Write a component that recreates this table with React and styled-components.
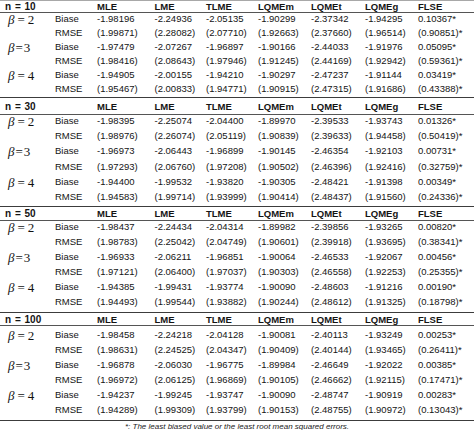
import React from 'react';
import styled, { createGlobalStyle } from 'styled-components';

const GlobalStyle = createGlobalStyle`
  body {
    margin: 0;
    background: #fff;
  }
`;

const COLS = '55px 42px 57.5px 51.5px 52px 53px 54px 53px 56px';

const Table = styled.div`
  width: 474px;
  height: 430px;
  overflow: hidden;
  font-family: "Liberation Sans", Arial, sans-serif;
  font-size: 9.5px;
  color: #141414;
`;

const HeadRow = styled.div`
  display: grid;
  grid-template-columns: ${COLS};
  align-items: center;
  box-sizing: border-box;
  height: ${p => p.$h}px;
  border-top: 1px solid ${p => (p.$first ? '#a8a8a8' : '#3c3c3c')};
  border-bottom: 1px solid #555;
  font-weight: bold;
  line-height: 11px;
`;

const SampleLabel = styled.div`
  grid-column: span 2;
  padding-left: 5px;
  font-size: 10px;
  word-spacing: 1px;
`;

const Block = styled.div`
  box-sizing: border-box;
  height: ${p => p.$h}px;
  padding-top: ${p => p.$pt}px;
`;

const Row = styled.div`
  display: grid;
  grid-template-columns: ${COLS};
  align-items: start;
  height: ${p => p.$rh}px;
  line-height: 11px;
  white-space: nowrap;
`;

const Beta = styled.div`
  padding-left: 8px;
  margin-top: 1px;
  font-family: "Liberation Serif", "Times New Roman", serif;
  font-size: 13px;
  color: #111;
`;

const BetaSym = styled.i`
  font-style: italic;
`;

const Eq = styled.span`
  margin: 0 ${p => p.$gap}px;
`;

const Cell = styled.div``;

const Footnote = styled.div`
  border-top: 1px solid #3c3c3c;
  padding-top: 1px;
  text-align: center;
  font-style: italic;
  font-size: 8px;
  line-height: 10px;
  color: #222;
`;

const methods = ['MLE', 'LME', 'TLME', 'LQMEm', 'LQMEt', 'LQMEg', 'FLSE'];

const sections = [
  {
    n: 10, head: 13, block: 84, pt: 0, rh: 14,
    groups: [
      ['-1.98196 -2.24936 -2.05135 -1.90299 -2.37342 -1.94295 0.10367*',
        '(1.99871) (2.28082) (2.07710) (1.92663) (2.37660) (1.96514) (0.90851)*'],
      ['-1.97479 -2.07267 -1.96897 -1.90166 -2.44033 -1.91976 0.05095*',
        '(1.98416) (2.08643) (1.97946) (1.91245) (2.44169) (1.92942) (0.59361)*'],
      ['-1.94905 -2.00155 -1.94210 -1.90297 -2.47237 -1.91144 0.03419*',
        '(1.95467) (2.00833) (1.94771) (1.90915) (2.47315) (1.91686) (0.43388)*'],
    ],
  },
  {
    n: 30, head: 18, block: 91, pt: 0, rh: 15.2,
    groups: [
      ['-1.98395 -2.25074 -2.04400 -1.89970 -2.39533 -1.93743 0.01326*',
        '(1.98976) (2.26074) (2.05119) (1.90839) (2.39633) (1.94458) (0.50419)*'],
      ['-1.96973 -2.06443 -1.96899 -1.90145 -2.46354 -1.92103 0.00731*',
        '(1.97293) (2.06760) (1.97208) (1.90502) (2.46396) (1.92416) (0.32759)*'],
      ['-1.94400 -1.99532 -1.93820 -1.90305 -2.48421 -1.91398 0.00349*',
        '(1.94583) (1.99714) (1.93999) (1.90414) (2.48437) (1.91560) (0.24336)*'],
    ],
  },
  {
    n: 50, head: 15, block: 91, pt: 0, rh: 15.1,
    groups: [
      ['-1.98437 -2.24434 -2.04314 -1.89982 -2.39856 -1.93265 0.00820*',
        '(1.98783) (2.25042) (2.04749) (1.90601) (2.39918) (1.93695) (0.38341)*'],
      ['-1.96933 -2.06211 -1.96851 -1.90064 -2.46533 -1.92067 0.00456*',
        '(1.97121) (2.06400) (1.97037) (1.90303) (2.46558) (1.92253) (0.25355)*'],
      ['-1.94385 -1.99431 -1.93774 -1.90090 -2.48603 -1.91216 0.00190*',
        '(1.94493) (1.99544) (1.93882) (1.90244) (2.48612) (1.91325) (0.18798)*'],
    ],
  },
  {
    n: 100, head: 14, block: 94, pt: 2.5, rh: 15,
    groups: [
      ['-1.98458 -2.24218 -2.04128 -1.90081 -2.40113 -1.93249 0.00253*',
        '(1.98631) (2.24525) (2.04347) (1.90409) (2.40144) (1.93465) (0.26411)*'],
      ['-1.96878 -2.06030 -1.96775 -1.89984 -2.46649 -1.92022 0.00385*',
        '(1.96972) (2.06125) (1.96869) (1.90105) (2.46662) (1.92115) (0.17471)*'],
      ['-1.94237 -1.99245 -1.93747 -1.90090 -2.48747 -1.90919 0.00283*',
        '(1.94289) (1.99309) (1.93799) (1.90153) (2.48755) (1.90972) (0.13043)*'],
    ],
  },
];

const betas = [
  { b: 2, gap: 3 },
  { b: 3, gap: 1 },
  { b: 4, gap: 3 },
];

const App = () => (
  <>
    <GlobalStyle />
    <Table>
      {sections.map((s, si) => (
        <React.Fragment key={s.n}>
          <HeadRow $h={s.head} $first={si === 0}>
            <SampleLabel>n = {s.n}</SampleLabel>
            {methods.map(m => <Cell key={m}>{m}</Cell>)}
          </HeadRow>
          <Block $h={s.block} $pt={s.pt}>
            {s.groups.map((g, gi) => (
              <React.Fragment key={gi}>
                <Row $rh={s.rh}>
                  <Beta>
                    <BetaSym>β</BetaSym>
                    <Eq $gap={betas[gi].gap}>=</Eq>
                    {betas[gi].b}
                  </Beta>
                  <Cell>Biase</Cell>
                  {g[0].split(' ').map((v, i) => <Cell key={i}>{v}</Cell>)}
                </Row>
                <Row $rh={s.rh}>
                  <Cell />
                  <Cell>RMSE</Cell>
                  {g[1].split(' ').map((v, i) => <Cell key={i}>{v}</Cell>)}
                </Row>
              </React.Fragment>
            ))}
          </Block>
        </React.Fragment>
      ))}
      <Footnote>*: The least biased value or the least root mean squared errors.</Footnote>
    </Table>
  </>
);

export default App;
